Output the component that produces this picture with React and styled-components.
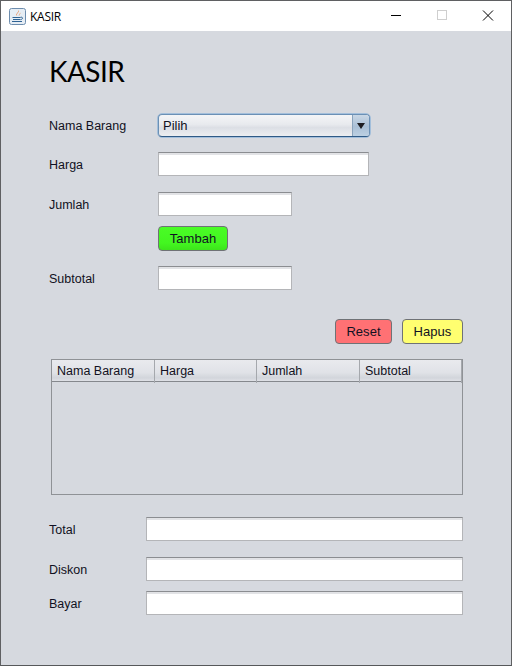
import React from "react";
import styled, { createGlobalStyle } from "styled-components";

const Global = createGlobalStyle`
  html, body {
    margin: 0;
    padding: 0;
    background: #d6d9df;
  }
  * {
    box-sizing: border-box;
  }
`;

const Window = styled.div`
  width: 512px;
  height: 666px;
  border: 1px solid #5f6062;
  border-bottom-color: #56585a;
  background: #d6d9df;
  font-family: "Liberation Sans", Arial, sans-serif;
  font-size: 12.5px;
  color: #111122;
  overflow: hidden;
`;

const TitleBar = styled.div`
  height: 30px;
  background: #fff;
  display: flex;
  align-items: center;
  padding-left: 8px;
`;

const AppIcon = styled.svg`
  width: 17px;
  height: 17px;
  margin-right: 4px;
  flex: none;
`;

const WindowTitle = styled.span`
  flex: 1;
  font-family: "Open Sans", "Liberation Sans", sans-serif;
  font-size: 12px;
  color: #000;
  letter-spacing: -0.25px;
`;

const WindowButton = styled.svg`
  width: 46px;
  height: 30px;
  flex: none;
`;

const Content = styled.div`
  padding: 24px 48px 0 48px;
`;

const Heading = styled.h1`
  margin: 0;
  height: 34px;
  line-height: 32px;
  font-family: Lato, "Liberation Sans", sans-serif;
  font-weight: 400;
  font-size: 28px;
  letter-spacing: -0.6px;
  color: #000;
`;

const Row = styled.div`
  display: flex;
  align-items: center;
  height: ${(p) => p.$height || 24}px;
  margin-top: ${(p) => p.$top}px;
`;

const Label = styled.label`
  flex: none;
  width: ${(p) => p.$width || 109}px;
  padding-top: ${(p) => p.$pad ?? 2}px;
`;

const Field = styled.div`
  height: 24px;
  width: ${(p) => (p.$width ? `${p.$width}px` : "auto")};
  flex: ${(p) => (p.$width ? "none" : 1)};
  background: #fff;
  border: 1px solid #b4b5b8;
  border-top-color: #8b8d91;
  box-shadow: inset 0 2px 0 #e2e3e6;
`;

const Combo = styled.div`
  width: 214px;
  height: 25px;
  margin-left: -1px;
  border: 1px solid #a3bfdb;
  border-radius: 5px;
`;

const ComboBody = styled.div`
  height: 100%;
  display: flex;
  border: 1px solid #6b90b5;
  border-bottom-color: #2f5a86;
  border-radius: 4px;
  overflow: hidden;
  background: linear-gradient(#f4f5f7, #e8eaee 45%, #dcdfe5 60%, #eceef1);
`;

const ComboText = styled.span`
  flex: 1;
  padding-left: 4px;
  font-size: 13px;
  line-height: 21px;
`;

const ComboArrow = styled.span`
  width: 17px;
  display: flex;
  align-items: center;
  justify-content: center;
  border-left: 1px solid #8aa3bc;
  background: linear-gradient(#c9d7e5, #a9bfd6 55%, #bcd0e2);
  &::after {
    content: "";
    border-left: 4px solid transparent;
    border-right: 4px solid transparent;
    border-top: 6px solid #1d1d22;
  }
`;

const Button = styled.button`
  display: block;
  height: 25px;
  width: ${(p) => p.$width}px;
  padding: 0;
  margin-left: ${(p) => p.$left || 0}px;
  border: 1px solid #6f7276;
  border-radius: 4px;
  background: ${(p) => p.$color};
  font: inherit;
  font-size: 13px;
  color: #111122;
  letter-spacing: 0.05px;
`;

const Actions = styled.div`
  display: flex;
  justify-content: flex-end;
  margin-top: 29px;
`;

const Table = styled.div`
  margin: 15px 0 0 2px;
  height: 136px;
  border: 1px solid #8f9296;
`;

const TableHeader = styled.div`
  display: grid;
  grid-template-columns: 103px 102px 103px 1fr;
  height: 22px;
  border-bottom: 1px solid #85888d;
  background: linear-gradient(#e9eaee, #e0e2e7 60%, #d2d5db 85%, #dfe1e6);
`;

const HeaderCell = styled.div`
  padding-left: 5px;
  line-height: 23px;
  border-right: 1px solid #a5a8ad;
  white-space: nowrap;
`;

const App = () => {
  return (
    <>
      <Global />
      <Window>
        <TitleBar>
          <AppIcon viewBox="0 0 17 17">
            <rect x="0.5" y="0.5" width="16" height="16" rx="2" fill="#e6edf4" stroke="#6d8dae" />
            <path d="M9.5 2c1.6 2.2-2.8 3.2-1.2 6-2.8-1.6 1.7-3.8 1.2-6z" fill="#e8691c" />
            <path d="M11.5 4.5c.3 1.5-2.2 2.1-1 3.6-1.8-1 .6-2.4 1-3.6z" fill="#e8691c" />
            <path d="M3.5 9.5h8M4 11.5h7.5M3 13.5h10" stroke="#2f6394" strokeWidth="1.2" />
            <path d="M11.5 9.3c2.4-.7 3 1.6.2 2.4" stroke="#2f6394" fill="none" />
          </AppIcon>
          <WindowTitle>KASIR</WindowTitle>
          <WindowButton viewBox="0 0 46 30">
            <path d="M18 14.5h10" stroke="#000" />
          </WindowButton>
          <WindowButton viewBox="0 0 46 30">
            <rect x="18.5" y="9.5" width="9" height="9" fill="none" stroke="#cfcfcf" />
          </WindowButton>
          <WindowButton viewBox="0 0 46 30">
            <path d="M18 9.5l10 10M28 9.5l-10 10" stroke="#000" />
          </WindowButton>
        </TitleBar>
        <Content>
          <Heading>KASIR</Heading>
          <Row $top={24} $height={25}>
            <Label $pad={0}>Nama Barang</Label>
            <Combo>
              <ComboBody>
                <ComboText>Pilih</ComboText>
                <ComboArrow />
              </ComboBody>
            </Combo>
          </Row>
          <Row $top={14}>
            <Label>Harga</Label>
            <Field $width={211} />
          </Row>
          <Row $top={16}>
            <Label>Jumlah</Label>
            <Field $width={134} />
          </Row>
          <Row $top={10} $height={25}>
            <Label />
            <Button $width={70} $color="linear-gradient(#4afc26, #43f620 70%, #3de41c)">Tambah</Button>
          </Row>
          <Row $top={15}>
            <Label>Subtotal</Label>
            <Field $width={134} />
          </Row>
          <Actions>
            <Button $width={57} $color="#ff7174">Reset</Button>
            <Button $width={61} $left={10} $color="#ffff70">Hapus</Button>
          </Actions>
          <Table>
            <TableHeader>
              <HeaderCell>Nama Barang</HeaderCell>
              <HeaderCell>Harga</HeaderCell>
              <HeaderCell>Jumlah</HeaderCell>
              <HeaderCell>Subtotal</HeaderCell>
            </TableHeader>
          </Table>
          <Row $top={22}>
            <Label $width={97}>Total</Label>
            <Field />
          </Row>
          <Row $top={16}>
            <Label $width={97}>Diskon</Label>
            <Field />
          </Row>
          <Row $top={10}>
            <Label $width={97}>Bayar</Label>
            <Field />
          </Row>
        </Content>
      </Window>
    </>
  );
};

export default App;
